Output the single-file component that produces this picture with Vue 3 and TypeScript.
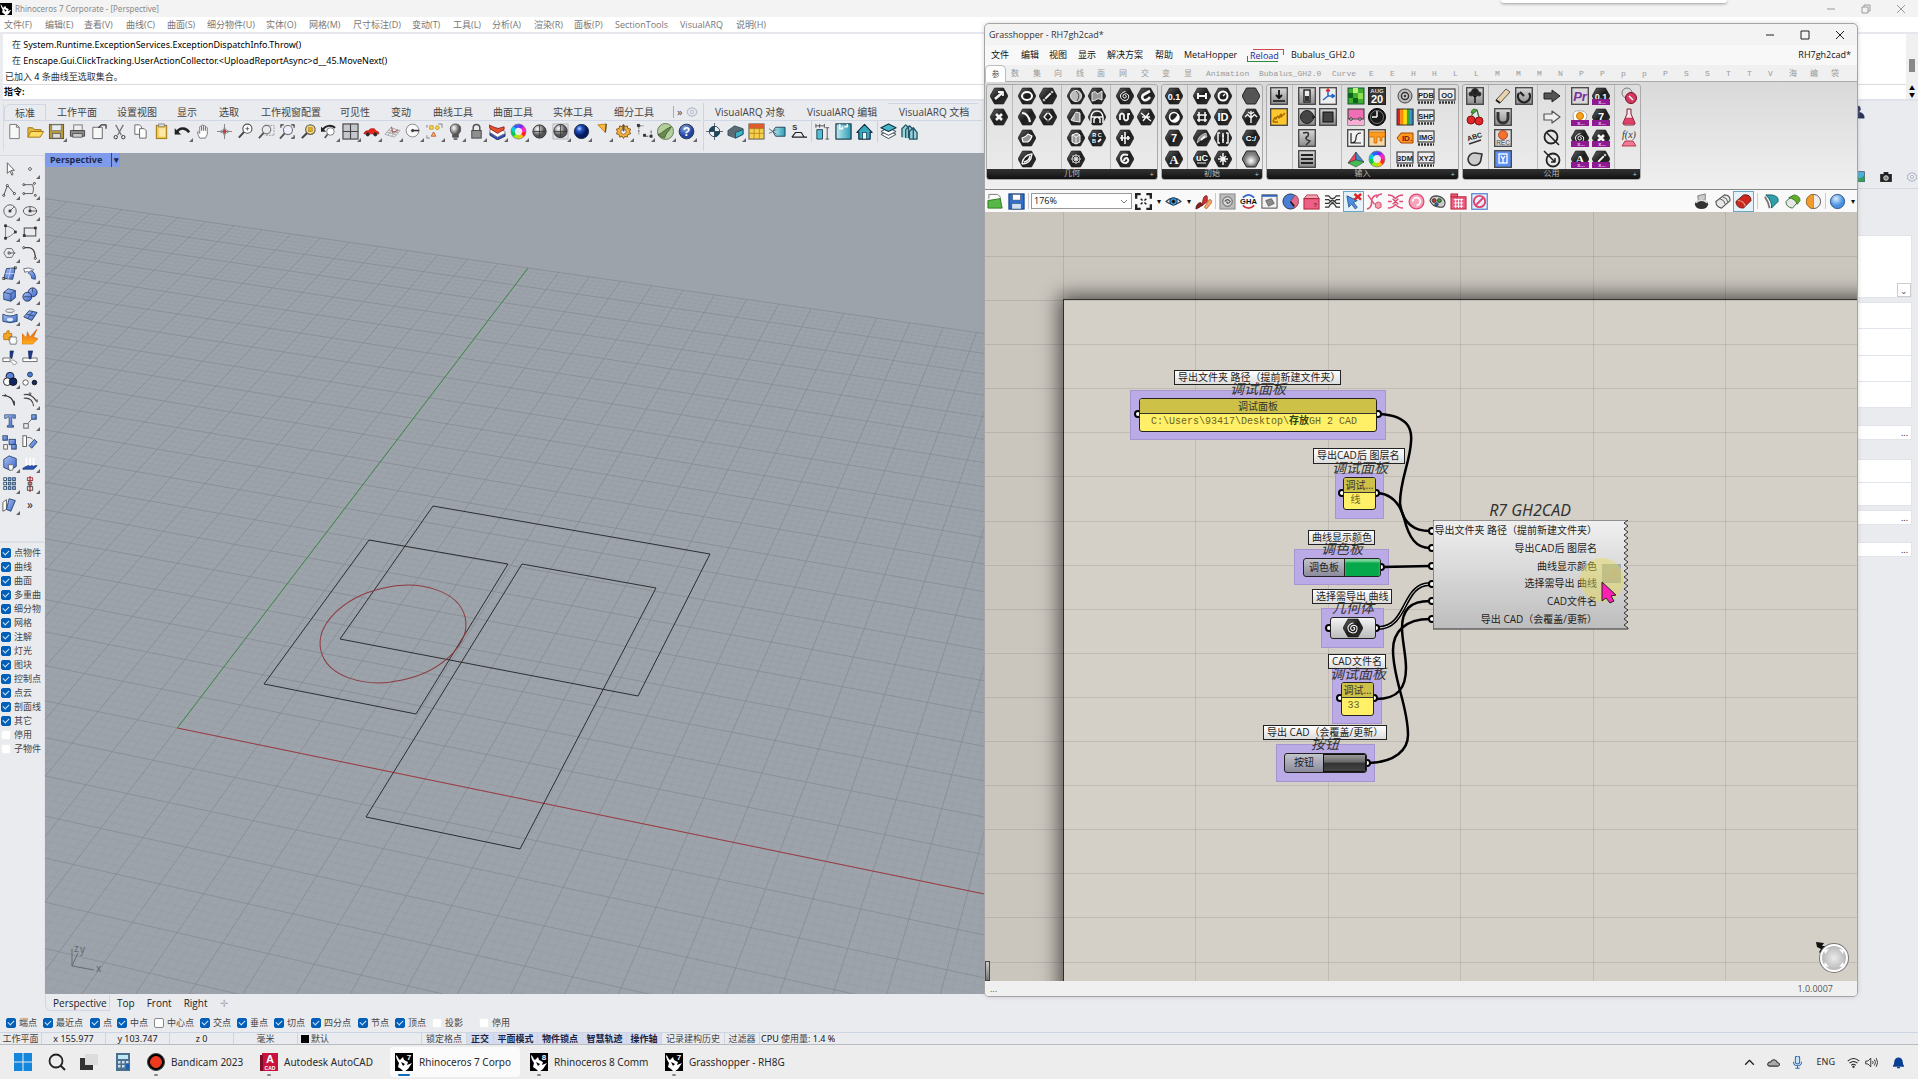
<script setup lang="ts">
import { ref } from 'vue'

interface Item { t: string; w: number }
interface Tool { i: string; more?: boolean; on?: boolean }
interface Box { x: number; y: number; w: number; h: number }

/* ---------- small drawing helpers for the icon set (18 x 18 grid) ---------- */
const p = (d: string, c = '#333', w = 1.2, f = 'none') =>
  `<path d="${d}" fill="${f}" stroke="${c}" stroke-width="${w}" stroke-linejoin="round"/>`
const c = (x: number, y: number, r: number, f = '#fff', st = '#333', w = 1) =>
  `<circle cx="${x}" cy="${y}" r="${r}" fill="${f}" stroke="${st}" stroke-width="${w}"/>`
const r = (x: number, y: number, w: number, h: number, f = '#fff', st = '#333', sw = 1) =>
  `<rect x="${x}" y="${y}" width="${w}" height="${h}" fill="${f}" stroke="${st}" stroke-width="${sw}"/>`
const tx = (t: string, x: number, y: number, size: number, f = '#fff', extra = '') =>
  `<text x="${x}" y="${y}" font-size="${size}" font-family="Liberation Sans, sans-serif" font-weight="bold" text-anchor="middle" fill="${f}" ${extra}>${t}</text>`
const hex = (inner: string) =>
  `<path d="M0 9L4.500 1H13.500L18 9L13.500 17H4.500Z" fill="url(#hexFill)" stroke="#111" stroke-width=".6"/>` + inner
const w = (d: string, sw = 1.8) => p(d, '#f4f4f4', sw)
const tile = (inner: string, f = 'url(#tileFill)') => r(.7, .7, 16.6, 16.6, f, '#444', 1.3) + inner
const chip = (t: string) =>
  r(1, 2, 16, 11, '#eee', '#444', 1.2) + tx(t, 9, 10.5, 7.500, '#222') + p('M1 15.500H17', '#333', 2.500).replace('/>', ' stroke-dasharray="2 1"/>')
const gear = 'M9 1.500l1.500 2.500 2.500-1 .6 2.800 2.900.7-1 2.500 1 2.500-2.900.7-.6 2.800-2.500-1L9 16.500l-1.500-2.500-2.500 1-.6-2.800L1.500 11.500l1-2.500-1-2.500 2.900-.7L5 3l2.500 1z'
const rhino = `<rect width="18" height="18" fill="#000"/><path d="M1 2c2 1 2 4 4 5l3-3 1 3 4 2-1 3 5-2-4 6-4 3-3-3-3-2 1-4C2 7 1 5 1 2z" fill="#fff"/><path d="M6 9l4 2-2 2z" fill="#000"/>`

const icons: Record<string, string> = {
  page: p('M4 1.500H11L14 4.500V16.500H4Z', '#777', 1, '#f7f7f7') + p('M11 1.500V4.500H14', '#777', 1),
  open: p('M1 15V5H6L8 7H15V9', '#a07410', 1, '#e8b843') + p('M1 15L4 9H17.500L14 15Z', '#a07410', 1, '#ffdc62'),
  save: r(1.500, 1.500, 15, 15, '#b59a3c', '#5b553c') + r(4, 2, 10, 6, '#e7edf3', '#777', .8) + r(5, 11, 8, 5, '#ddd', '#555', .8),
  print: r(5, 2, 9, 6, '#eee', '#777') + p('M1.500 8H16.500V14H1.500Z', '#444', 1, '#8b8b8b') + r(4, 11, 10, 4, '#c9c9c9', '#444', .8),
  props: p('M3 4.500H13V16.500H3Z', '#666', 1, '#f8f8f8') + p('M9 5L12 2H17V6', '#333', 1.3),
  cut: p('M5 2L11 13M13 2L7 13', '#777', 1.4) + c(5, 15, 1.800, 'none') + c(13, 15, 1.800, 'none'),
  copy: p('M3 2H8L10 4V12H3Z', '#666', 1, '#fff') + p('M8 6H13L15 8V16H8Z', '#666', 1, '#fff'),
  paste: r(3.500, 2.500, 11, 14, '#f6c544', '#9c7417') + r(6, 1, 6, 3, '#ddd', '#777', .8) + r(6, 5.500, 7, 9, '#fde9a6', 'none', 0),
  undo: p('M3 10C6 4 13 5 16 10', '#222', 2.600) + p('M1 6V12H7Z', '#222', .5, '#222'),
  hand: p('M5 16C3 12 2 10 3 9L5 11V4Q6 3 7 4V8V2.500Q8 2 9 2.500V8V3Q10 2.500 11 3V8V5Q12 4 13 5V12L11 16Z', '#777', 1, '#fff'),
  orbit: p('M1 9H17M9 1V17', '#777', .9) + p('M4 9Q9 5 14 9Q9 13 4 9M9 4Q12 9 9 14Q6 9 9 4', '#888', .9) + c(9, 9, 1.300, '#c33', '#c33'),
  zoom: c(11, 6, 4.800, '#fff', '#555', 1.2) + p('M7.500 9.500L2 15.500', '#444', 2) + p('M9 6H13M11 4V8', '#555', .9),
  zoomw: p('M7 2.500H17V13H7', '#888', .8).replace('/>', ' stroke-dasharray="2 1"/>') + c(9, 7, 4.500, 'none', '#777', 1.2) + p('M6 10.500L1 16', '#555', 2),
  zoome: p('M2 5V2H5M13 2H16V5M16 13V16H13', '#333', 1.2) + c(9.500, 7.500, 4.800, '#eef', '#777', 1.2) + p('M6 11L1 16.500', '#555', 2),
  zooms: c(11, 7, 5, '#fbe25c', '#666', 1.3) + r(9, 5, 4, 4, '#d9b400', '#a67', .6) + p('M7.500 10.500L2 16', '#444', 2.200),
  unview: p('M2 7C5 2 11 2 15 5', '#222', 2) + p('M0 4V9H5Z', '#222', .4, '#222') + c(10, 9, 4, '#fff', '#777') + p('M7 12L4 16', '#555', 1.8),
  views: r(1, 1, 16, 16, '#c4c8cc', '#444', 1.2) + p('M9 1V17M1 9H17', '#444', 1.2),
  car: p('M1 11Q2 8 6 8L8 6H12L14 8.500Q17 9 17 11.500H1Z', '#a00', .6, '#e42618') + c(5, 12, 1.700, '#222') + c(13, 12, 1.700, '#222'),
  cplane: p('M1 12L7 5L17 8L11 15ZM3 9.500L13 12.500M5 7.500L15 10.500M4 13L10 6M8 14L14 7', '#999', .8) + p('M9 10L15 8M9 10L8 4', '#a44', 1),
  cset: c(8, 8, 6.800, '#f8f8f8', '#888') + p('M8 8H15', '#333', 1.6) + c(8, 8, 1.200, '#333'),
  sel: p('M1 5V2M13 1H17V5M1 13V16H4', '#777', .9) + r(4, 3, 3.500, 3.500, '#ffd34a', '#a80', .7) + c(12, 5, 2, '#ffd34a', '#a80', .7) + p('M5.500 14L8 9.500L10.500 14Z', '#b42', .8, '#ffb96a'),
  bulb: p('M6 12Q3 9 3.500 6A5.500 5 0 0 1 14.500 6Q15 9 12 12V15H6Z', '#555', 1, 'url(#greyBall)') + p('M7 17H11', '#444', 1.5),
  lock: p('M5.500 8V5A3.500 3.500 0 0 1 12.500 5V8', '#555', 1.6) + r(4, 8, 10, 8, '#8f8f8f', '#444'),
  layers: p('M1 10L8 7L17 11V14L9 18L1 13Z', '#224', .8, '#2a53c0') + p('M1 7L8 5L17 9V11L9 15L1 10Z', '#766', .8, '#fff') + p('M0 2L9 6L16 4V7L9 11L1 6Z', '#811', .8, '#e6502c'),
  wheel: ['#f22', '#fb0', '#9e0', '#0c5', '#0cd', '#26f', '#82f', '#f2c'].map((k, n) => {
    const a = (n * Math.PI) / 4, b = a + Math.PI / 4 + .05
    return `<path d="M${9 + 6 * Math.cos(a)} ${9 + 6 * Math.sin(a)}A6 6 0 0 1 ${9 + 6 * Math.cos(b)} ${9 + 6 * Math.sin(b)}" stroke="${k}" stroke-width="4" fill="none"/>`
  }).join('') + c(9, 9, 8, 'none', '#777', .7),
  sphere: c(9, 9, 7, 'url(#greyBall)', '#333') + p('M9 2V16M2 9H16', '#333', .8),
  spheres: r(1, 1, 16, 16, '#dcdfe4', '#aaa', .8) + c(9, 8.500, 7, 'url(#greyBall)', '#333') + p('M9 2V15M2 9H16', '#333', .8),
  ball: c(9, 9, 7.500, 'url(#blueBall)', '#124'),
  cone: p('M4 2L13 1L12 10Z', '#a70', .8, '#ffb53a') + p('M12 10L13 1', '#555', 1.4),
  gear: p(gear, '#875a10', 1, '#f2b13c') + c(9, 9, 2.800, '#fff', '#865') + p('M9 2V9', '#555', 2),
  dims: p('M3 3H8M3 3V12M10 14H16M16 8V14', '#555', 1).replace('/>', ' stroke-dasharray="3 1"/>') + r(1.500, 1.500, 2, 2, '#333') + r(8, 12, 2, 2, '#333') + r(15, 13, 2, 2, '#333'),
  ghball: c(9, 9, 8.500, '#b4cf9d', '#667a55') + p('M1 12C5 12 7 7 15 4C13 9 10 9 8 16Q3 15 1 12Z', '#35531f', .800, '#6a8a55'),
  help: c(9, 9, 7.800, 'url(#blueSoft)', '#234') + tx('?', 9, 13.500, 13),
  va1: c(9, 9, 5.500, '#e9f3f6', '#345') + p('M9 9V3.500A5.500 5.500 0 0 0 3.500 9ZM9 9V14.500A5.500 5.500 0 0 0 14.500 9Z', '#135', .5, '#174a5c') + p('M0 9H18M9 0V18', '#345', .8),
  va2: p('M1 8L8 3L17 6V12L9 16L1 13Z', '#345', .8, '#5b6c74') + p('M9 10L17 7V12L9 16Z', '#145', .8, '#3fb3c6'),
  va3: r(1, 1, 16, 16, '#f6d24b', '#555') + r(1, 1, 16, 5, '#e4572b', 'none', 0) + p('M1 6H17M1 11H17M6.500 1V17M12 1V17', '#b07a22', .8),
  va4: p('M4 9L7 4.500H17V14H7Z', '#245', 1, 'url(#teal)') + p('M0 6L8 12M0 11L8 7', '#456', .8),
  va5: tx('S', 5, 7, 8, '#333') + p('M2 15H18M2 15L6 10H12L15 15', '#222', 1.2),
  va6: p('M3 7H9V17H3Z', '#245', 1, '#4fc0d6') + p('M2 3H11M2 1V5M6 1V5M11 1V5M14 5V17M12 5H16M12 17H16', '#444', .9),
  va7: p('M1 1H17V17H1Z', '#245', 1.4, 'url(#teal)') + p('M5 1V6H8V4M13 1V4H10', '#fff', 1.6),
  va8: p('M1 10L9 1.500L17 10H15V17H3V10Z', '#134', 1.3, '#36a8bf') + r(7, 10, 4, 7, '#e9f6f8', '#245', .8),
  va9: p('M1 12L9 8L17 12L9 16.500Z', '#345', 1, '#fff') + p('M1 9L9 5L17 9L9 13Z', '#345', 1, '#fff') + p('M1 5L9 1L17 5L9 9Z', '#134', 1.2, '#47b7ca'),
  va10: p('M1 15V6L5 2L8 5V16M5 16V7L9 3L13 7V17M9 17V9L13 5L17 10V17Z', '#256', 1.4, '#9bd3dc'),
  arrow: p('M6 2V14L9 11L11 16L12.500 15L10.500 10.500H14Z', '#555', 1, '#fff'),
  pt: c(9, 9, 1.600, '#fff', '#555'),
  pline: p('M2 15L6 4L14 13', '#444', 1) + c(2, 15, 1.200) + c(6, 4, 1.200) + c(14, 13, 1.200),
  curve: p('M2 3H12Q14 8 12 13H2', '#555', 1) + c(2, 3, 1.100) + c(14, 1.500, 1.100) + c(2, 13, 1.100) + c(15, 15, 1.100),
  circle: c(9, 9, 7, 'none', '#555') + p('M9 9L14 4', '#444', .9) + r(8, 8, 2, 2, '#333'),
  ellipse: `<ellipse cx="9" cy="9" rx="7.500" ry="5" fill="none" stroke="#555"/>` + p('M9 9H17M9 9V4', '#444', .9) + r(8, 8, 2, 2, '#333'),
  arc: p('M4 2Q13 4 15 9Q10 14 4 16Z', '#666', .9) + r(3, 1, 2, 2, '#333') + r(14, 8, 2, 2, '#333') + r(3, 15, 2, 2, '#333'),
  rect: r(2.500, 4.500, 13, 9, 'none', '#444', 1.1) + r(1.500, 12, 2, 2, '#333') + r(14, 3.500, 2, 2, '#333'),
  poly: p('M5 4H11L14 9L11 14H5L2 9Z', '#666', 1) + c(8, 9, 1.300) + p('M9 9H15', '#444', .9),
  fillet: p('M2 3H8Q15 4 15 15', '#444', 1.5) + c(2, 3, 1.200) + c(15, 15, 1.200),
  srf: p('M5 3L15 2L12 15L2 14Z', '#246', 1, 'url(#blu)') + p('M4 8.500H14M10 2.500L7 14.500', '#dfe8ff', .8) + r(1, 13, 2, 2, '#fff') + r(14, 1, 2, 2, '#fff'),
  srf2: p('M2 3Q8 1 13 4L10 8Q6 5 3 7Z', '#445', .8, '#fff') + p('M10 5Q16 8 15 15L11 14Q11 9 7 8Z', '#246', .9, 'url(#blu)'),
  box: p('M2 6L7 2L15 4V12L10 16L2 14Z', '#246', 1, 'url(#blu)') + p('M2 6L10 8L15 4M10 8V16', '#246', .9),
  balls: c(12, 6, 5, 'url(#blu)', '#235') + c(6, 11, 5, 'url(#blu)', '#235') + p('M12 1V6M2 11H10', '#235', .8),
  pipe: `<ellipse cx="9" cy="3" rx="5" ry="2" fill="none" stroke="#777"/>` + p('M1 7Q9 11 17 7V15Q9 18 1 15Z', '#246', 1, 'url(#blu)') + `<ellipse cx="9" cy="13" rx="3.500" ry="2" fill="#dfe8ff"/>`,
  mesh: p('M2 10L8 3L17 5L11 14Z', '#246', 1, 'url(#blu)') + p('M5 7L14 9M12 4L6 12', '#246', .9),
  puzzle: p('M2 5H5Q5 1 8 2V5H11V9H8V12H2V9Q0 8 2 7Z', '#a60', .8, '#f6a623') + p('M9 9H16V12Q18 13 16 15V17H9V14Q6 13 9 12Z', '#555', .8, '#fff'),
  burst: p('M0 17V5L5 10L6 3L9 9L17 0L13 9L18 11L12 17Z', '#b50', .5, 'url(#fire)'),
  trim: p('M1 9H9V13H1Z', '#555', .9, '#fff') + p('M9 1H13L11 10L9 8Z', '#124', .6, '#1d3a8a') + p('M10 13L14 17L17 14L12 11Z', '#777', .9, '#fff'),
  split: p('M1 9H17V13H1Z', '#555', .9, '#fff') + p('M7 1H12L10 10H8Z', '#124', .6, '#1d3a8a'),
  bool: c(9, 6, 4.500, '#5b83e2', '#111') + c(6, 12, 4.300, '#fff', '#111') + c(12.500, 12, 4.300, '#12265e', '#111'),
  pts: c(9, 4, 2.800, '#4c78d8', '#245') + c(4, 13, 3, '#fff', '#555') + c(14, 13, 2.600, '#142a66', '#111'),
  ccrv: p('M2 4Q12 4 14 15', '#333', 1.4) + p('M0 4H5L3 2M14 15V10', '#333', .9),
  ccrv2: p('M2 7Q12 6 13 16M2 3Q10 1 16 10', '#444', 1.2) + c(9, 2, 1.100) + c(17, 10, 1.100),
  text: p('M3 2H15V6H13L12 4.500H11V14H13V16H6V14H8V4.500H6L5 6H3Z', '#246', .8, 'url(#blu)'),
  move: r(2, 12, 5, 5, '#eee', '#555') + r(11, 2, 5, 5, 'url(#blu)', '#246') + p('M7 11L11 7', '#444', .9),
  grp: r(1, 2, 5, 5, 'url(#blu)', '#246') + r(8, 6, 7, 6, 'url(#blu)', '#246') + r(2, 12, 4, 5, '#fff', '#555') + r(11, 12, 5, 5, 'url(#blu)', '#246'),
  rot: r(1, 2, 4, 12, '#fff', '#555') + p('M8 13L14 6L17 9L11 16Z', '#246', 1, 'url(#blu)') + p('M6 4Q10 3 12 6', '#555', .9),
  solid: p('M2 5L8 1L16 4V13L9 17L2 14Z', '#246', 1, 'url(#blu)') + p('M7 11H13L12 17H8Z', '#555', .8, '#fff'),
  proj: p('M1 15L6 12H17L13 16H1Z', '#136', .8, '#2c52b8') + p('M5 3V12M9 3V12M13 3V12', '#fff', 1.8),
  arr: [0, 1, 2].map(a => [0, 1, 2].map(b => r(2 + a * 5, 2 + b * 5, 3, 3, a ? '#9db8ee' : '#fff', '#246', 1)).join('')).join(''),
  align: p('M9 0V18', '#c33', 1.4) + r(6, 2, 6, 3, 'none', '#933') + r(7, 7, 4, 3, 'none', '#444') + r(6, 12, 6, 4, 'none', '#444'),
  flow: p('M1 6L5 3V14L1 16Z', '#555', 1, '#fff') + p('M8 2L15 4L10 16L5 14Z', '#246', 1, 'url(#blu)'),

  g_open: p('M2 6V1.500H11L14 4V10', '#777', 1, '#fff') + p('M1 8L14 6L16 16H1Z', '#2a7a1a', 1, '#58b847'),
  g_save: r(1, 1, 16, 16, '#2f6fd0', '#153f86', 1.2) + r(5, 1.500, 8, 6, '#fff', '#555', .6) + r(4, 11, 10, 6, '#cfe0f7', '#245', .6),
  focus: p('M1 6V1H6M12 1H17V6M17 12V17H12M6 17H1V12', '#222', 3) + p('M6 6L8 8M12 6L10 8M6 12L8 10M12 12L10 10', '#222', 1.6),
  eye: p('M1 9Q9 2 17 9Q9 15 1 9Z', '#345', 1.300, '#fff') + c(9, 9, 4, '#3d9be0', '#135') + c(9, 9, 1.600, '#000'),
  brush: p('M7 14L9 5Q12 1 13 4L13 9Z', '#711', .8, '#c33') + p('M10 15L15 7Q19 7 17 11L12 17Z', '#a60', .8, '#f6a27a') + p('M1 17Q1 11 6 10Q9 12 5 15Z', '#400', .8, '#822'),
  g1: r(1, 1, 16, 16, '#bbb', '#888') + c(9, 9, 5, '#ddd', '#555') + p('M6 9Q9 5 12 9Q9 13 8 9', '#555', 1.2),
  gha: p('M3 5Q9 -1 15 5', '#2c68c8', 1.800) + p('M15 13Q9 19 3 13', '#c33', 1.800) + tx('GHA', 9, 12, 8, '#111'),
  g3: r(1, 2, 16, 14, '#f2f2f2', '#444') + r(1, 2, 16, 2, '#36b', 'none', 0) + p('M5 8L11 6L14 11L8 14Z', '#555', .8, '#8b8b8b'),
  g4: c(9, 9, 8, '#4a7fd6', '#235') + p('M9 9L14 2A8 8 0 0 1 13 16Z', '#733', .6, '#e36a8a') + p('M9 9L13 14', '#111', 1.4),
  g5: p('M1 6L4 2H15L17 6Z', '#922', .8, '#f3a0b5') + r(1, 6, 16, 11, '#ec5f86', '#a23') + tx('?', 13, 15, 6, '#722'),
  g6: p('M1 3H5Q9 9 13 3H17M1 7H5Q9 13 13 7H17M1 15H5Q9 7 13 15H17M1 11H5Q9 4 13 11H17', '#333', 1.3),
  g7: p('M2 3L13 8L9 10L13 15L11 17L7 12L4 15Z', '#247', .8, '#4f8fe0') + p('M10 1L17 7M17 1L10 7', '#d22', 2.600),
  g8: p('M1 17Q6 16 6 9Q6 3 12 2M2 2L9 12M17 1Q13 1 11 5', '#e0527c', 1.6) + p('M10 11Q13 8 16 11V15Q13 18 10 15Z', '#c34', .8, '#f3a0b5'),
  g9: p('M1 2Q6 2 9 6Q12 2 17 2M1 9H5M13 9H17M6 6Q9 9 12 12M12 6Q9 9 6 12M1 16Q6 16 9 12Q12 16 17 16', '#e04a76', 1.600),
  g10: c(9, 9, 7.800, '#f6a5bb', '#e04a76', 1.4) + p('M5 9A4 4 0 1 1 9 13', '#fff', 1.8),
  g11: p('M1 8Q2 3 8 3Q16 4 17 10Q17 16 11 15Q3 14 1 8Z', '#444', 1.2, '#ccc') + c(5.500, 8, 2, '#d33') + c(11, 8, 2, '#3a3') + c(8, 12, 1.700, '#36c'),
  g12: r(1, 4, 16, 13, '#e85c82', '#b23') + r(1, 1, 7, 3, '#e85c82', '#b23') + p('M4 7H14M4 10.500H14M4 14H14M6 6V16M12 6V16M9 6V16', '#fff', 1),
  g13: r(.8, .8, 16.400, 16.400, '#e4efff', '#4a78c8', 1.200) + c(9, 9, 6, 'none', '#e0446c', 2) + p('M5 13L13 5', '#e0446c', 2),
  d1: p('M5 3L13 1V7L6 10Z', '#666', .8, '#ccc') + `<ellipse cx="9" cy="12" rx="7" ry="5" fill="#333"/>` + p('M3 10Q9 5 15 10', '#ddd', 2),
  d2: p('M2 9L11 2Q17 2 17 8L8 16Q2 15 2 9Z', '#555', 1.2, '#e8e8e8') + p('M6 6Q11 7 12 12M9 4Q14 5 15 10', '#555', 1),
  d3: p('M1 9L9 2Q17 1 17 8L9 16Q1 16 1 9Z', '#611', .9, '#c9281c') + p('M3 8Q9 8 11 14', '#f29a8a', 1.200),
  d4: p('M3 2H9Q17 3 16 9L9 16Q10 9 3 2Z', '#155', .9, '#2ea0ac') + p('M2 4Q6 10 7 16', '#777', 2),
  d5: p('M2 9L9 3L15 9L9 16Q2 15 2 9Z', '#363', .9, '#e6e6e6') + p('M5 5L11 2Q17 3 17 8L14 12Q12 6 5 5Z', '#262', .8, '#5fae25'),
  d6: c(9, 9, 7.500, '#eee', '#555') + p('M9 1.500A7.500 7.500 0 0 0 9 16.500Z', '#a60', .6, '#f49a2a'),
  d7: c(9, 9, 7.500, 'url(#sky)', '#26508a'),

  h1: hex(w('M5 12L12 6', 2.600) + w('M8 5H13V9')), h2: hex(w('M6 6L12 12M12 6L6 12', 2.600)),
  h3: hex(`<ellipse cx="9" cy="9" rx="5" ry="4" fill="none" stroke="#fff" stroke-width="2"/>`), h4: hex(w('M6 12L12 6') + c(5, 13, 1.500, '#fff') + c(13, 5, 1.500, '#fff')),
  h5: hex(w('M4 5Q10 5 12 14', 2.200)), h6: hex(w('M9 4L13 9L9 13L5 9Z', 1.3) + c(9, 4, 1, '#fff') + c(9, 13, 1, '#fff')),
  h7: hex(p('M4 9Q8 8 10 5L14 7Q13 11 10 13L5 13Z', '#fff', 1.200, '#999')), h8: hex(w('M4 14Q13 14 14 4Q5 5 4 14M6 12Q11 11 12 6', 1.4)),
  h9: hex(c(9, 9, 5.500, '#bbb', '#eee') + p('M9 4Q14 8 10 14', '#555', 1)), h10: hex(p('M4 14V6Q8 3 9 7Q11 6 14 4V13Q10 11 9 12Q7 14 4 14Z', '#eee', 1, '#999')),
  h11: hex(p('M4 12L9 4L13 5V14L6 13Z', '#eee', 1, '#bbb') + p('M9 5V13M11 5V13', '#666', .800)), h12: hex(w('M3 15V9Q4 3 9 3Q14 3 15 9V15M3 9H15M6 15V11Q9 7 12 11V15', 1.5)),
  h13: hex(p('M5 6L10 4L13 6V13L9 15L5 13Z', '#fff', 1, '#999') + p('M5 6L9 8L13 6M9 8V15', '#fff', .800)), h14: hex(tx('R C', 9, 8, 5.500) + tx('B', 6, 14, 5.500) + w('M10 13L13 10', 2)),
  h15: hex(w('M9 9Q10.500 8 10.500 9.500Q10 11.500 8 11Q6 9.500 7.500 7.500Q10.500 5.500 12.500 8Q13.500 13 9 13.500Q4 13 4.500 8Q6.500 4.500 9.500 4.500', 1)),
  h16: hex(w('M13 4L6 8Q4 11 7 13Q10 14 13 10', 2.600)),
  h17: hex(w('M4 12V7Q6 4 8 7V11Q10 14 12 11V6H14', 1.8)), h18: hex(w('M4 5L14 13M6 13L12 5M5 9H13', 1.500)),
  h19: hex(w('M4 9H14M9 3V15', 1.600) + w('M6 6V12M12 7V11', 1.800)), h20: hex(w('M12 5Q6 3 5 8Q5 13 10 13Q14 11 11 8Q8 8 8 11', 2)),
  h21: hex(w('M9 4V14M4 9H14M5.500 5.500L12.500 12.500M12.500 5.500L5.500 12.500', .8) + c(9, 9, 4, 'none', '#ddd', .8) + c(9, 9, 1.500, 'none', '#ddd', .8)),
  n1: hex(tx('0.1', 9, 12.500, 9)), n2: hex(c(9, 9, 4.500, 'none', '#fff', 1.500) + p('M13 6A4.500 4.500 0 0 1 6 13Q11 11 13 6Z', '#fff', .5, '#fff')), n3: hex(tx('7', 9, 13, 11)), n4: hex(tx('A', 9, 13.500, 13, '#fff').replace('Liberation Sans', 'Liberation Serif')),
  n5: hex(w('M4 9H14M5 6V12M13 6V12', 2)), n6: hex(c(9, 9, 4.500, 'none', '#fff', 2) + w('M9 9L11 7', 1.200)), n7: hex(w('M6 4V14M12 4V14M4 7H14M4 12H14', 1.6)), n8: hex(tx('ID', 9, 13, 11)),
  n9: hex(p('M4 14Q5 6 13 4L14 8Q8 10 4 14Z', '#eee', .6, '#999') + w('M8 11L12 7')), n10: hex(w('M6 4H4V14H6M12 4H14V14H12M8 7H10M8 11H10M9 4V14', 1.5)),
  n11: hex(tx('uC', 9, 11, 9) + w('M4 13H13', 1.200)), n12: hex(w('M9 3V15M4 9H14M6 6L12 12M12 6L6 12', 1.500)),
  n13: `<path d="M0 9L4.500 1H13.500L18 9L13.500 17H4.500Z" fill="#555" stroke="#222"/>`, n14: hex(w('M9 15V8M9 10L5 6M9 10L13 6M5 7L3 9M13 7L15 9M9 8V3M6 4L9 6L12 4', 1.400)), n15: hex(tx('C:/', 9, 12, 8)), n16: `<path d="M0 9L4.500 1H13.500L18 9L13.500 17H4.500Z" fill="#777" stroke="#222"/>` + c(9, 9.500, 6, 'url(#whiteBall)', '#888', .5),
  i1: tile(p('M9 3V10M6 8L9 11L12 8', '#111', 1.8) + p('M3 14H15', '#111', 1.6)), i2: tile(p('M3 14Q5 7 6 11Q8 6 9 10Q12 3 11 9L15 5M3 14H8', '#a86c00', 1.500), '#ffc62e'),
  i3: tile(r(6, 3, 6, 12, '#eee', '#222', 1.4) + r(7, 9, 4, 5, '#333', 'none', 0)), i4: tile(c(9, 9, 6.500, '#444', '#222') + p('M15 7L17 9L15 11Z', '#222', 1, '#222')), i5: tile(p('M5 4Q12 2 10 7Q5 10 12 12L8 16', '#333', 1.500)), i6: tile(p('M3 5H15M3 9H15M3 13H15', '#222', 2)),
  i7: tile(p('M9 3V9H15M9 9L4 13', '#26c', 1.5) + p('M7 4L9 1.500L11 4Z', '#d22', 1, '#d22') + p('M13 7L16 9L13 11Z', '#26c', 1, '#26c'), '#eee'), i8: tile(r(4, 4, 10, 10, '#444', '#111')),
  i9: r(1, 1, 16, 16, '#3fae2f', '#153') + r(6, 1, 5, 5, '#b9f27c', 'none', 0) + r(1, 6, 5, 5, '#0c641c', 'none', 0) + r(11, 6, 5, 6, '#8be052', 'none', 0) + r(6, 11, 5, 5, '#0c641c', 'none', 0),
  i10: r(1, 1, 16, 16, '#ee6fb3', '#333') + r(1, 11, 16, 6, '#f7aed4', 'none', 0) + p('M1 11H17', '#333', .8) + c(4, 11, 1.300) + c(13, 11, 1.300), i11: tile(p('M4 14Q9 14 9 9T14 4M4 4V14H14', '#222', 1.2), '#f2f2f2'),
  i12: p('M1 13L9 2L9 10Z', '#333', .6, '#e46') + p('M9 2L17 12L9 10Z', '#333', .5, '#48c') + p('M1 13L9 10L17 12L9 17Z', '#333', .5, '#4b5'),
  i13: r(0, 0, 18, 18, '#333', '#111') + tx('AUG', 9, 6, 6, '#ddd') + tx('20', 9, 16, 11), i14: c(9, 9, 8.500, '#1a1a1a', '#000') + p('M9 9V3M9 9H4', '#fff', 1.400) + c(9, 9, 6.500, 'none', '#888', .8),
  i15: tile(p('M1 3H17V8H14V12H12V8H9V14H6V8H1Z', '#a50', .6, '#ff9c1f'), '#f7d7a6'),
  i17: c(9, 9, 7, '#bbb', '#444') + c(9, 9, 3.500, '#ddd', '#333', 1.500) + c(9, 9, 1, '#222'), i18: ['#d22', '#f80', '#fd0', '#3a3', '#28c'].map((k, n) => r(1 + n * 3.300, 1, 3.300, 16, k, 'none', 0)).join('') + r(1, 1, 16, 16, 'none', '#333'),
  i19: p('M1 9L5 4H17V14H5Z', '#a40', 1, '#ff9a1f') + tx('ID.', 11, 12, 8, '#622'), i20: chip('3DM'), i21: chip('PDB'), i22: chip('SHP'), i23: chip('IMG'), i24: chip('XYZ'), i25: chip('OO'),
  u1: tile(p('M9 16V8M9 10L5 7M9 10L13 7M9 8L7 4M9 8L12 4', '#111', 1.5) + c(9, 5, 3.500, '#222') + c(5, 7, 2, '#222') + c(13, 7, 2, '#222')), u2: c(5, 12, 4, '#e0262a', '#811') + c(13, 13, 4, '#e0262a', '#811') + p('M5 9Q7 4 11 2Q12 6 13 9', '#363', 1.2) + p('M11 2Q6 -1 5 5Q9 6 11 2Z', '#252', .6, '#4ca83a'),
  u3: `<g transform="rotate(-18 9 9)">${tx('ABC', 9, 10, 7, '#222')}</g>` + p('M3 15L15 11', '#333', 1.500), u4: p('M2 9A6.500 6.500 0 1 0 15 9L16 4L9 3A6.500 6.500 0 0 0 2 9Z', '#333', 1.6, '#ccc'),
  u5: p('M2 13L12 2L16 5L6 16Z', '#555', 1, '#e9d3ac') + p('M2 13L6 16', '#222', 2), u6: tile(p('M4 4V10A5 5 0 0 0 14 10V4', '#333', 3)), u7: tile(c(9, 6, 4.500, '#f4732a', '#a32', .8) + tx('REC', 9, 16, 6.500, '#777'), '#ddd'), u8: tile(r(5, 4, 8, 9, 'none', '#fff', 1.300) + p('M9 13V9L7 6M9 9L11 6', '#fff', 1.300), '#5d8ff0'),
  u9: tile(p('M4 6A6 6 0 1 0 14 6M9 9L5 5', '#222', 2.200)), u10: p('M1 6H9V3L17 9L9 15V12H1Z', '#222', 1, '#555'), u11: p('M1 6H9V3L17 9L9 15V12H1Z', '#555', 1.200, '#eee'), u12: c(8, 8, 6.500, 'none', '#222', 1.800) + p('M4 4L16 16', '#222', 1.600), u13: c(10, 10, 6.500, 'none', '#222', 1.800) + p('M1 1L12 12M12 8V12H8', '#222', 1.500),
  u14: tile(tx('Pr', 9, 14, 13, '#7a2fa0', 'font-style="italic"'), '#d9d9d9'),
  u15: c(7, 6, 5, '#ddd', '#777') + c(11, 11, 5.500, '#d63a62', '#712') + p('M9 9L13 13', '#fff', 1.500), u16: p('M7 1H11V6L15 15Q15 17 13 17H5Q3 17 3 15L7 6Z', '#723', 1, '#fbe3ea') + p('M5.500 10H12.500L15 16H3Z', '#a23', .5, '#e0416c'), u17: `<text x="9" y="9" font-size="10" font-family="Liberation Serif, serif" font-style="italic" text-anchor="middle" fill="#333">f(x)</text>` + p('M5 12H13L16 17H2Z', '#a23', .8, '#f07a98'),
  winlogo: `<path d="M0 0h8.500v8.500H0zM9.500 0H18v8.500H9.500zM0 9.500h8.500V18H0zM9.500 9.500H18V18H9.500z" fill="#1487dd"/>`,
  search: c(8, 8, 6.500, 'none', '#222', 1.800) + p('M12.500 12.500L17 17', '#222', 2),
  task: r(0, 5, 13, 12, '#333', 'none', 0) + r(5, 1, 13, 11, '#dcdcdc', 'none', 0),
  calc: r(2, 0, 14, 18, '#4b6f8c', 'none', 0) + r(4, 2, 10, 4, '#bfe6f5', 'none', 0) + r(4, 8, 2.500, 2.500, '#cde', 'none', 0) + r(8, 8, 2.500, 2.500, '#cde', 'none', 0) + r(12, 8, 2.500, 2.500, '#cde', 'none', 0) + r(4, 12, 2.500, 2.500, '#cde', 'none', 0) + r(8, 12, 2.500, 2.500, '#cde', 'none', 0) + r(12, 10.500, 3, 6, '#1c5fae', 'none', 0),
  bandi: c(9, 9, 8.500, '#000', '#444') + c(9, 9, 5.500, '#f03a20', '#f03a20'),
  acad: r(2, 0, 16, 18, '#c8143c', 'none', 0) + r(0, 2, 3, 16, '#7d0c24', 'none', 0) + tx('A', 10, 10, 11) + tx('CAD', 10, 16.500, 5),
  rh: rhino, rh7: rhino + tx('7', 14, 7, 8), rh8: rhino + tx('8', 14, 7, 8),
  up: p('M3 12L9 6L15 12', '#222', 1.800), cloud: p('M3 14Q0 13 1.500 10Q3 8 5 8.500Q7 4 11 5.500Q14 6.500 14 9Q18 10 17 12.500Q16 14.500 14 14Z', '#333', 1.500, '#aaa'), mic: `<rect x="6" y="0" width="6" height="11" rx="3" fill="#cfe3f8" stroke="#2b68b5" stroke-width="1.400"/>` + p('M3.500 8V9Q4 13.500 9 13.500T14.500 9V8M9 13.500V17M6 17H12', '#2b68b5', 1.400),
  wifi: p('M1 7Q9 0 17 7M3.500 10Q9 5 14.500 10M6 13Q9 10 12 13', '#222', 1.400) + c(9, 15, 1.200, '#222'), vol: p('M1 7H4L8 3V15L4 11H1Z', '#222', 1.200) + p('M10.500 7Q12 9 10.500 11M13 5Q16 9 13 13M15.500 3Q19.500 9 15.500 15', '#222', 1.200), bell: p('M2 14Q4 12 4 8A5 5 0 0 1 14 8Q14 12 16 14ZM7 16H11', '#0b3f94', 1.600, '#0b3f94'),
  setting: p(gear, '#9aa3b3', 1) + c(9, 9, 2.500, 'none', '#9aa3b3'),
  camera: r(1, 5, 16, 11, '#222', '#111') + r(6, 2, 6, 3, '#222', '#111') + c(9, 10.500, 3.500, '#888', '#fff'),
  pic: r(0, 1, 17, 15, '#4cb0d8', '#345') + p('M0 15L6 8L10 12L17 7V16H0Z', '#285', .5, '#3c9a5a'),
  user: c(8, 5, 4, '#2a3258', '#2a3258') + p('M0 17Q0 9 8 9T17 15V17Z', '#2a3258', .5, '#2a3258')
}
;[['u18', 'n1'], ['u19', 'n3'], ['u20', 'h2'], ['u21', 'h4'], ['u23', 'h15'], ['u24', 'n4']].forEach(([k, b]) => {
  icons[k] = icons[b] + r(0, 12, 18, 6, '#8d1a8f', 'none', 0) + tx('x...', 10, 16.500, 5.500, '#f0c0f0')
})
icons.u22 = p('M2 8Q2 2 8 3Q15 2 16 8L14 13H3Z', '#999', .8, '#fff') + c(9, 8, 3.500, '#f7a11b', '#c70') + r(0, 12, 18, 6, '#8d1a8f', 'none', 0) + tx('x...', 10, 16.500, 5.500, '#f0c0f0')
icons.i16 = icons.wheel

const it = (s: string, ws: number[]): Item[] => s.split('|').map((t, n) => ({ t, w: ws[n] }))
const tools = (s: string): Tool[] => s.split(' ').map(k => ({ i: k.replace(/[+*]/g, ''), more: k.includes('+'), on: k.includes('*') }))

const menus = it('文件(F)|编辑(E)|查看(V)|曲线(C)|曲面(S)|细分物件(U)|实体(O)|网格(M)|尺寸标注(D)|变动(T)|工具(L)|分析(A)|渲染(R)|面板(P)|SectionTools|VisualARQ|说明(H)',
  [41, 39, 42, 41, 40, 59, 43, 44, 59, 41, 39, 42, 40, 41, 65, 56, 40])
const tabs = it('标准|工作平面|设置视图|显示|选取|工作视窗配置|可见性|变动|曲线工具|曲面工具|实体工具|细分工具', [42, 60, 60, 42, 42, 79, 51, 42, 60, 60, 61, 60])
const vaTabs = it('VisualARQ 对象|VisualARQ 编辑|VisualARQ 文档', [92, 92, 90])
const mainTools = tools('page open save+ print props cut copy paste undo+ hand orbit zoom zoomw zoome zooms unview+ views+ car+ cplane+ cset+ sel+ bulb+ lock+ layers+ wheel+ sphere spheres+ ball+ cone+ gear+ dims+ ghball+ help+')
const vaTools = [tools('va1 va2+ va3 va4 va5'), tools('va6 va7 va8'), tools('va9 va10')]
const sideTools = tools('arrow pt+ pline+ curve+ circle+ ellipse+ arc+ rect+ poly+ fillet+ srf+ srf2+ box+ balls+ pipe+ mesh+ puzzle burst trim split bool+ pts ccrv ccrv2+ text move+ grp rot solid+ proj+ arr+ align+ flow+')

const filters = ref('点物件|曲线|曲面|多重曲|细分物|网格|注解|灯光|图块|控制点|点云|剖面线|其它|停用|子物件'.split('|').map((t, n) => ({ t, on: n < 13, soft: n >= 13 })))
const osnaps = ref(it('端点|最近点|点|中点|中心点|交点|垂点|切点|四分点|节点|顶点|投影|停用', [37, 47, 27, 37, 46, 37, 37, 37, 47, 37, 37, 47, 40]).map((o, n) => ({ ...o, on: n < 11 && n !== 4, soft: n > 10 })))
const status = it('工作平面|x 155.977|y 103.747|z 0|毫米', [42, 64, 64, 64, 64])
const modes = it('锁定格点|正交|平面模式|物件锁点|智慧轨迹|操作轴|记录建构历史|过滤器', [45, 27, 44, 45, 44, 35, 63, 35])

const ghMenus = it('文件|编辑|视图|显示|解决方案|帮助|MetaHopper', [30, 28, 29, 29, 48, 29, 63])
const ghTabs = it('数|集|向|线|面|网|交|变|显|Animation|Bubalus_GH2.0|Curve|E|E|H|H|L|L|M|M|M|N|P|P|p|p|P|S|S|T|T|V|海|编|袋',
  [22, 21, 22, 21, 22, 22, 21, 22, 22, 53, 73, 37, ...Array(20).fill(21), 21, 21, 21])
const ribbon = [
  { t: '几何', g: [['h1 h2'], ['h3 h5 h7 h8', 'h4 h6'], ['h9 h11 h13 h21', 'h10 h12 h14'], ['h15 h17 h19 h20', 'h16 h18']] },
  { t: '初始', g: [['n1 n2 n3 n4'], ['n5 n7 n9 n11', 'n6 n8 n10 n12'], ['n13 n14 n15 n16']] },
  { t: '输入', g: [['i1 i2'], ['i3 i4 i5 i6', 'i7 i8'], ['i9 i10 i11 i12', 'i13 i14 i15 i16'], ['i17 i18 i19 i20', 'i21 i22 i23 i24', 'i25']] },
  { t: '公用', g: [['u1 u2 u3 u4'], ['u5 u6 u7 u8', 'u9'], ['u10 u11 u12 u13'], ['u14 u22 u23 u24', 'u18 u19 u20 u21'], ['u15 u16 u17']] }
].map(q => ({ t: q.t, g: q.g.map(cols => cols.map(s => s.split(' '))) }))
const ghTools = tools('g1 gha g3 g4 g5 g6 g7* g8 g9 g10 g11 g12 g13')

/* ---------- perspective construction plane ---------- */
const A = 0.004868, B = 0.01864
const project = (u: number, v: number) => {
  const s = -u * A, t = v * B, q = 1 + s + t
  return `${((132.3 - 8103 * s + 1424 * t) / q).toFixed(1)} ${((575 - 1119 * (s + t)) / q).toFixed(1)}`
}
const gridPath = (major: boolean) => {
  let d = ''
  for (let n = -100; n <= 100; n++) {
    if ((n % 5 === 0) !== major) continue
    d += `M${project(n / 5, -20)}L${project(n / 5, 20)}M${project(-20, n / 5)}L${project(20, n / 5)}`
  }
  return d
}
const minor = gridPath(false), major = gridPath(true)
const axisX = `M${project(0, 0)}L${project(20, 0)}`
const axisY = `M${project(0, 0)}L${project(0, 20)}`

/* ---------- node canvas ---------- */
const vLines = Array.from({ length: 8 }, (_, k) => Math.round(78 + 132.4 * k))
const hLines = Array.from({ length: 18 }, (_, k) => Math.round(88 + 44.1 * (k - 1)))
const OX = 985, OY = 212
const at = (b: Box) => ({ left: b.x - OX + 'px', top: b.y - OY + 'px', width: b.w + 'px', height: b.h + 'px' })
const b = (x: number, y: number, w: number, h: number): Box => ({ x, y, w, h })
const groups = [b(1130, 390, 256, 50), b(1335, 473, 49, 46), b(1294, 549, 95, 36), b(1321, 608, 63, 40), b(1332, 668, 50, 56), b(1276, 744, 99, 38)]
const titles = [['调试面板', 1258, 389], ['调试面板', 1360, 468], ['调色板', 1342, 549], ['几何体', 1353, 608], ['调试面板', 1358, 674], ['按钮', 1325, 744]] as [string, number, number][]
const notes = [
  { t: '导出文件夹 路径（提前新建文件夹）', b: b(1174, 370, 167, 15) }, { t: '导出CAD后 图层名', b: b(1313, 448, 92, 16) }, { t: '曲线显示颜色', b: b(1308, 530, 67, 15) },
  { t: '选择需导出 曲线', b: b(1312, 589, 80, 15) }, { t: 'CAD文件名', b: b(1328, 654, 58, 15) }, { t: '导出 CAD（会覆盖/更新）', b: b(1263, 725, 124, 15) }
]
const panels = [
  { h: '调试面板', a: 'C:\\Users\\93417\\Desktop\\', m: '存放', z: 'GH 2 CAD', b: b(1139, 398, 238, 34) },
  { h: '调试...', a: '', m: '线', z: '', b: b(1343, 477, 33, 33), thin: true }, { h: '调试...', a: '33', m: '', z: '', b: b(1341, 682, 33, 34) }
]
const grips = [[1138, 414], [1378, 414], [1342, 493], [1376, 493], [1381, 567], [1329, 628], [1376, 628], [1340, 698], [1374, 698], [1367, 763], [1432, 531], [1432, 548], [1432, 566], [1432, 584], [1432, 601], [1432, 619]]
const wires = [
  'M1380 414C1411 416 1412 432 1411 442C1410 462 1400 480 1400 503C1402 520 1410 531 1430 531',
  'M1377 493C1392 494 1400 504 1404 518C1409 538 1416 548 1430 548', 'M1383 567L1430 566',
  'M1376 699C1398 699 1406 688 1406 668C1406 655 1402 640 1402 628C1402 610 1410 601 1430 601',
  'M1369 763C1395 762 1408 750 1408 735C1408 705 1393 680 1393 650C1393 632 1405 619 1430 619'
]
const geoWire = 'M1378 628C1408 628 1402 584 1430 584'
const inputs = ['导出文件夹 路径（提前新建文件夹）', '导出CAD后 图层名', '曲线显示颜色', '选择需导出 曲线', 'CAD文件名', '导出 CAD（会覆盖/更新）']
/* component outline: straight on the left, saw-tooth on the right */
let torn = 'M0 0H195'
for (let y = 0; y < 108; y += 6) torn += `L191 ${y + 3}L195 ${y + 6}`
torn += 'V109H0Z'
const zoomLevel = ref('176%')
const command = ref('')
</script>

<template>
  <div class="desk">
    <svg class="defs" width="0" height="0">
      <defs>
        <linearGradient id="hexFill" x2="1" y2="1"><stop offset="0" stop-color="#666" /><stop offset=".5" stop-color="#1c1c1c" /><stop offset="1" stop-color="#333" /></linearGradient>
        <linearGradient id="tileFill" x2="0" y2="1"><stop offset="0" stop-color="#d8d8d8" /><stop offset="1" stop-color="#8c8c8c" /></linearGradient>
        <radialGradient id="greyBall" cx=".35" cy=".3"><stop offset="0" stop-color="#fff" /><stop offset="1" stop-color="#555" /></radialGradient>
        <radialGradient id="whiteBall" cx=".5" cy=".6"><stop offset="0" stop-color="#fff" /><stop offset="1" stop-color="#888" /></radialGradient>
        <radialGradient id="dial"><stop offset="0" stop-color="#ececec" /><stop offset="1" stop-color="#b4b4b4" /></radialGradient>
        <radialGradient id="blueBall" cx=".35" cy=".3"><stop offset="0" stop-color="#bcd6ff" /><stop offset=".4" stop-color="#2255c4" /><stop offset="1" stop-color="#041a5c" /></radialGradient>
        <radialGradient id="blueSoft" cx=".4" cy=".3"><stop offset="0" stop-color="#8fa9e8" /><stop offset="1" stop-color="#2243a0" /></radialGradient>
        <radialGradient id="sky" cx=".4" cy=".3"><stop offset="0" stop-color="#d9ecff" /><stop offset="1" stop-color="#4a90e0" /></radialGradient>
        <linearGradient id="blu" x2="1" y2="1"><stop offset="0" stop-color="#a9c0f5" /><stop offset="1" stop-color="#3c66cc" /></linearGradient>
        <linearGradient id="teal" x2="1" y2="0"><stop offset="0" stop-color="#c2ebf2" /><stop offset="1" stop-color="#2b9db4" /></linearGradient>
        <linearGradient id="fire" x2="0" y2="1"><stop offset="0" stop-color="#e8590c" /><stop offset="1" stop-color="#ffb01f" /></linearGradient>
        <linearGradient id="comp" x2="0" y2="1"><stop offset="0" stop-color="#f0f0f0" /><stop offset="1" stop-color="#bdbdbd" /></linearGradient>
      </defs>
    </svg>

    <header class="title">
      <svg class="logo" viewBox="0 0 18 18" v-html="icons.rh"></svg>
      <span>Rhinoceros 7 Corporate - [Perspective]</span>
      <i class="hint"></i>
      <div class="winctl">
        <button aria-label="Minimize"><svg viewBox="0 0 10 10"><path d="M1 5H9" /></svg></button>
        <button aria-label="Restore"><svg viewBox="0 0 10 10"><path d="M1 3H7V9H1ZM3 3V1H9V7H7" /></svg></button>
        <button aria-label="Close"><svg viewBox="0 0 10 10"><path d="M1 1L9 9M9 1L1 9" /></svg></button>
      </div>
    </header>

    <nav class="menu"><a v-for="m in menus" :key="m.t" href="#" :style="{ width: m.w + 'px' }">{{ m.t }}</a></nav>

    <section class="cmd">
      <div class="cmdmain">
        <div class="history">
          <p class="ind">在 <b>System.Runtime.ExceptionServices.ExceptionDispatchInfo.Throw()</b></p>
          <p class="ind">在 <b>Enscape.Gui.ClickTracking.UserActionCollector.&lt;UploadReportAsync&gt;d__45.MoveNext()</b></p>
          <p>已加入 <b>4</b> 条曲线至选取集合。</p>
        </div>
        <label class="prompt"><strong>指令:</strong><input v-model="command" type="text" /></label>
      </div>
      <div class="cmdbar"><i class="track"><i></i></i><button aria-label="Up">▲</button><button aria-label="Down">▼</button></div>
    </section>

    <section class="bars">
      <div class="bar main">
        <div class="tabs">
          <button v-for="(t, n) in tabs" :key="t.t" :class="{ cur: n === 0 }" :style="{ width: t.w + 'px' }">{{ t.t }}</button>
          <span class="ovf">»</span><svg class="cog" viewBox="0 0 18 18" v-html="icons.setting"></svg>
        </div>
        <div class="icons">
          <button v-for="t in mainTools" :key="t.i" class="cell" :class="{ more: t.more }" :aria-label="t.i"><svg viewBox="0 0 18 18" v-html="icons[t.i]"></svg></button>
        </div>
      </div>
      <div class="bar va">
        <div class="tabs">
          <button v-for="(t, n) in vaTabs" :key="t.t" :class="{ last: n === 2 }" :style="{ width: t.w + 'px' }">{{ t.t }}</button>
        </div>
        <div class="icons">
          <div v-for="(g, n) in vaTools" :key="n" class="cluster">
            <button v-for="t in g" :key="t.i" class="cell" :class="{ more: t.more }" :aria-label="t.i"><svg viewBox="0 0 18 18" v-html="icons[t.i]"></svg></button>
          </div>
        </div>
      </div>
      <svg class="user" viewBox="0 0 18 18" v-html="icons.user"></svg>
    </section>

    <main class="work">
      <aside class="side">
        <div class="palette">
          <button v-for="t in sideTools" :key="t.i" class="cell" :class="{ more: t.more }" :aria-label="t.i"><svg viewBox="0 0 18 18" v-html="icons[t.i]"></svg></button>
          <button class="cell more2">»</button>
        </div>
        <div class="filters">
          <label v-for="f in filters" :key="f.t"><input v-model="f.on" type="checkbox" :class="{ soft: f.soft }" />{{ f.t }}</label>
        </div>
      </aside>
      <div class="view">
        <svg class="scene" width="100%" height="100%">
          <path :d="minor" class="minor" /><path :d="major" class="major" />
          <path :d="axisX" class="ax" /><path :d="axisY" class="ay" />
          <g class="crv">
            <path d="M324 387L463 411L371 561L219 531Z" />
            <path d="M388 353L665 401L593 543L295 486Z" />
            <path d="M477 411L611 435L475 696L321 664Z" />
          </g>
          <ellipse class="sel" cx="348" cy="481" rx="74" ry="47" transform="rotate(-13 348 481)" />
          <g class="gizmo"><path d="M27 796V813L49 817M27 813L33 800" /><text x="29" y="799">z</text><text x="35" y="800">y</text><text x="51" y="819">x</text></g>
        </svg>
        <button class="vlabel"><span>Perspective</span><i>▾</i></button>
      </div>
      <aside class="props">
        <div class="phead"><svg viewBox="0 0 18 18" v-html="icons.pic"></svg><svg viewBox="0 0 18 18" v-html="icons.camera"></svg><svg viewBox="0 0 18 18" v-html="icons.setting"></svg></div>
        <div class="pbody">
          <div class="block a"><select aria-label="value"><option>⌄</option></select></div>
          <div class="block c"><i></i><i></i><i></i></div>
          <div class="block r"><button>...</button></div>
          <div class="block d"><i></i></div>
          <div class="block r near"><button>...</button></div>
          <div class="block r"><button>...</button></div>
        </div>
      </aside>
    </main>

    <nav class="vtabs"><button class="cur">Perspective</button><button>Top</button><button>Front</button><button>Right</button><span>✛</span></nav>

    <section class="osnap">
      <label v-for="o in osnaps" :key="o.t" :style="{ width: o.w + 'px' }"><input v-model="o.on" type="checkbox" :class="{ soft: o.soft }" />{{ o.t }}</label>
    </section>

    <footer class="status">
      <span v-for="(s, n) in status" :key="s.t" :class="{ num: n > 0 && n < 4 }" :style="{ width: s.w + 'px' }">{{ s.t }}</span>
      <span class="layer"><i></i>默认</span>
      <button v-for="(m, n) in modes" :key="m.t" :class="{ on: n > 0 && n < 6 }" :style="{ width: m.w + 'px' }">{{ m.t }}</button>
      <span class="cpu"><b>CPU</b> 使用量: <b>1.4 %</b></span>
    </footer>

    <footer class="taskbar">
      <button class="tb" aria-label="Start"><svg viewBox="0 0 18 18" v-html="icons.winlogo"></svg></button>
      <button class="tb" aria-label="Search"><svg viewBox="0 0 18 18" v-html="icons.search"></svg></button>
      <button class="tb" aria-label="Task view"><svg viewBox="0 0 18 18" v-html="icons.task"></svg></button>
      <button class="tb calc" aria-label="Calculator"><svg viewBox="0 0 18 18" v-html="icons.calc"></svg></button>
      <button class="app a1"><svg viewBox="0 0 18 18" v-html="icons.bandi"></svg><span>Bandicam 2023</span></button>
      <button class="app a2"><svg viewBox="0 0 18 18" v-html="icons.acad"></svg><span>Autodesk AutoCAD</span></button>
      <button class="app a3 cur"><svg viewBox="0 0 18 18" v-html="icons.rh7"></svg><span>Rhinoceros 7 Corpo</span></button>
      <button class="app a4"><svg viewBox="0 0 18 18" v-html="icons.rh8"></svg><span>Rhinoceros 8 Comm</span></button>
      <button class="app a5"><svg viewBox="0 0 18 18" v-html="icons.rh7"></svg><span>Grasshopper - RH8G</span></button>
      <div class="tray">
        <svg viewBox="0 0 18 18" v-html="icons.up"></svg><svg viewBox="0 0 18 18" v-html="icons.cloud"></svg><svg viewBox="0 0 18 18" v-html="icons.mic"></svg>
        <span>ENG</span>
        <svg class="t" viewBox="0 0 18 18" v-html="icons.wifi"></svg><svg class="t" viewBox="0 0 18 18" v-html="icons.vol"></svg><svg viewBox="0 0 18 18" v-html="icons.bell"></svg>
      </div>
    </footer>

    <section class="gh">
      <header class="ghtitle">
        <span>Grasshopper - RH7gh2cad*</span>
        <div class="winctl dark">
          <button aria-label="Minimize"><svg viewBox="0 0 10 10"><path d="M1 5H9" /></svg></button>
          <button aria-label="Maximize"><svg viewBox="0 0 10 10"><path d="M1 1H9V9H1Z" /></svg></button>
          <button aria-label="Close"><svg viewBox="0 0 10 10"><path d="M1 1L9 9M9 1L1 9" /></svg></button>
        </div>
      </header>
      <nav class="ghmenu">
        <a v-for="m in ghMenus" :key="m.t" href="#" :style="{ width: m.w + 'px' }">{{ m.t }}</a>
        <a href="#" class="reload"><i class="rt"></i>Reload<i class="rb"></i></a>
        <a href="#">Bubalus_GH2.0</a>
        <span class="doc">RH7gh2cad*</span>
      </nav>
      <nav class="ghtabs"><button class="cur">参</button><button v-for="(t, n) in ghTabs" :key="n" :style="{ width: t.w + 'px' }">{{ t.t }}</button></nav>
      <div class="ribbon">
        <div v-for="q in ribbon" :key="q.t" class="panel">
          <div class="sets">
            <div v-for="(g, n) in q.g" :key="n" class="set">
              <div v-for="(col, k) in g" :key="k" class="col">
                <button v-for="i in col" :key="i" class="cell big" :aria-label="i"><svg viewBox="0 0 18 18" v-html="icons[i]"></svg></button>
              </div>
            </div>
          </div>
          <div class="cap">{{ q.t }}<i>+</i></div>
        </div>
      </div>
      <div class="ghbar">
        <button class="cell" aria-label="Open"><svg viewBox="0 0 18 18" v-html="icons.g_open"></svg></button>
        <button class="cell" aria-label="Save"><svg viewBox="0 0 18 18" v-html="icons.g_save"></svg></button>
        <i class="sep"></i>
        <span class="combo"><select v-model="zoomLevel" aria-label="Zoom"><option>176%</option><option>100%</option></select><svg viewBox="0 0 8 6"><path d="M1 1L4 4L7 1" /></svg></span>
        <button class="cell"><svg viewBox="0 0 18 18" v-html="icons.focus"></svg></button><i class="dd">▾</i>
        <button class="cell"><svg viewBox="0 0 18 18" v-html="icons.eye"></svg></button><i class="dd">▾</i>
        <button class="cell"><svg viewBox="0 0 18 18" v-html="icons.brush"></svg></button>
        <i class="sep"></i>
        <button v-for="t in ghTools" :key="t.i" class="cell" :class="{ on: t.on }" :aria-label="t.i"><svg viewBox="0 0 18 18" v-html="icons[t.i]"></svg></button>
        <i class="grow"></i>
        <button class="cell"><svg viewBox="0 0 18 18" v-html="icons.d1"></svg></button>
        <button class="cell"><svg viewBox="0 0 18 18" v-html="icons.d2"></svg></button>
        <button class="cell on"><svg viewBox="0 0 18 18" v-html="icons.d3"></svg></button>
        <i class="sep wide"></i>
        <button class="cell"><svg viewBox="0 0 18 18" v-html="icons.d4"></svg></button>
        <button class="cell"><svg viewBox="0 0 18 18" v-html="icons.d5"></svg></button>
        <button class="cell"><svg viewBox="0 0 18 18" v-html="icons.d6"></svg></button>
        <i class="sep"></i>
        <button class="cell"><svg viewBox="0 0 18 18" v-html="icons.d7"></svg></button><i class="dd">▾</i>
      </div>

      <div class="canvas">
        <div class="sheet"></div>
        <svg class="layer0" width="100%" height="100%">
          <path v-for="x in vLines" :key="'v' + x" :d="`M${x}.5 0V1200`" class="gl" />
          <path v-for="y in hLines" :key="'h' + y" :d="`M0 ${y}.5H2400`" class="gl" />
        </svg>
        <div v-for="(g, n) in groups" :key="'g' + n" class="group" :style="at(g)"></div>
        <svg class="layer0" width="100%" height="100%">
          <g :transform="`translate(${-OX} ${-OY})`">
            <path v-for="d in wires" :key="d" :d="d" class="wire" />
            <path :d="geoWire" class="wire wide" /><path :d="geoWire" class="wire core" />
            <circle v-for="(g, n) in grips" :key="n" :cx="g[0]" :cy="g[1]" r="3" class="grip" />
          </g>
        </svg>
        <div v-for="(n, k) in notes" :key="'n' + k" class="note" :style="at(n.b)">{{ n.t }}</div>
        <div v-for="(t, k) in titles" :key="'t' + k" class="ntitle" :style="at(b(t[1] - 50, t[2] - 10, 100, 20))">{{ t[0] }}</div>
        <div v-for="(q, k) in panels" :key="'p' + k" class="pan" :style="at(q.b)">
          <h4>{{ q.h }}</h4><p>{{ q.a }}<b :class="{ thin: q.thin }">{{ q.m }}</b>{{ q.z }}</p>
        </div>
        <div class="pill" :style="at(b(1303, 558, 78, 19))"><span>调色板</span><i class="green"></i></div>
        <div class="pill light" :style="at(b(1330, 617, 46, 22))"><svg viewBox="0 0 18 18" v-html="icons.h15"></svg></div>
        <div class="pill" :style="at(b(1284, 753, 83, 20))"><span>按钮</span><button aria-label="按钮"></button></div>
        <div class="ntitle big" :style="at(b(1470, 500, 120, 22))">R7 GH2CAD</div>
        <div class="comp" :style="at(b(1433, 520, 196, 110))">
          <svg width="196" height="110"><path :d="torn" /></svg>
          <ul><li v-for="i in inputs" :key="i">{{ i }}</li></ul>
        </div>
        <svg class="pointer" :style="at(b(1570, 550, 70, 60))" viewBox="0 0 70 60">
          <rect x="32" y="14" width="19" height="19" fill="#8f98a8" opacity=".7" /><path d="M38 29L46 17M42 29L48 20" stroke="#c98" />
          <circle cx="32" cy="30" r="22" fill="#e6dc46" opacity=".42" />
          <path d="M32 32V51L36 48L40 53L44 51L41 46L46 45Z" fill="#ff1fb4" stroke="#222" stroke-width="1" />
        </svg>
        <i class="nub"></i>
        <svg class="compass" viewBox="0 0 36 34">
          <path d="M1 1L9 2L7 5L11 5L6 13L4 11L6 8L2 6Z" fill="#111" />
          <circle cx="19" cy="17" r="15" fill="#777" /><circle cx="19" cy="17" r="13" fill="url(#dial)" stroke="#fff" stroke-width="2" />
          <path d="M9 9L14 8L10 13ZM29 9L24 8L28 13ZM9 25L14 26L10 21ZM29 25L24 26L28 21Z" fill="#fff" />
        </svg>
      </div>
      <footer class="ghstatus"><span>...</span><span>1.0.0007</span></footer>
    </section>
  </div>
</template>

<style>
body { margin: 0; background: #eaebef; }
</style>

<style scoped>
* { box-sizing: border-box; }
.desk { position: relative; display: flex; flex-direction: column; min-height: 100vh; overflow: hidden; background: #eaebef; color: #444; font: 9px/14px "Open Sans", "Noto Sans CJK SC", sans-serif; white-space: nowrap; }
.defs { position: absolute; }
button, select, input { margin: 0; padding: 0; border: 0; background: none; color: inherit; font: inherit; }
a { color: inherit; text-decoration: none; }
p, h4, ul { margin: 0; padding: 0; }
i { font-style: normal; }
svg { display: block; }

.title { display: flex; align-items: center; height: 17px; background: #f3f3f3; color: #8a8a8a; font: 8px/14px "Noto Sans", sans-serif; }
.logo { width: 12px; height: 12px; margin-right: 3px; }
.hint { width: 226px; height: 3px; margin: 0 0 14px auto; border-radius: 0 0 4px 4px; background: #fff; box-shadow: 0 1px 3px #999; }
.winctl { display: flex; gap: 25px; margin: 0 12px 0 99px; }
.winctl svg { width: 10px; height: 10px; }
.winctl path { fill: none; stroke: #999; }
.winctl.dark { margin: 0 12px 0 auto; }
.winctl.dark path { stroke: #222; }

.menu { display: flex; align-items: center; height: 15px; padding-left: 4px; background: #fff; color: #777; }
.menu a { flex: none; }

.cmd { display: flex; height: 69px; border-top: 2px solid #e6e8ee; border-bottom: 2px solid #dfe2ea; border-left: 3px solid #eaebef; background: #fff; color: #333; }
.cmdmain { flex: 1; }
.cmd b { font: 9px/16px "Noto Sans", sans-serif; color: #000; }
.history { padding: 3px 0 0 2px; line-height: 16px; height: 51px; border-bottom: 1px solid #dcdcdc; }
.history .ind { padding-left: 7px; }
.history p { height: 16px; }
.prompt { display: flex; align-items: center; height: 14px; padding-left: 1px; color: #000; }
.prompt input { flex: 1; height: 12px; outline: none; }
.cmdbar { display: flex; flex-direction: column; width: 12px; background: #f0f0f0; font-size: 6px; line-height: 7px; color: #000; }
.track { height: 51px; padding: 25px 3px 0; }
.track i { display: block; height: 13px; background: #888; }

.bars { display: flex; height: 52px; }
.bar { border-left: 1px solid #d5dae3; margin: 2px 0; }
.bar.main { width: 698px; margin-left: 3px; }
.bar.va { width: 279px; border-left: 1px solid #d0d4dc; margin-left: 2px; }
.tabs { display: flex; align-items: center; height: 18px; border-bottom: 1px solid #cfd6e6; font-size: 10px; color: #444; }
.tabs button { flex: none; text-align: left; padding-left: 11px; height: 18px; }
.tabs button.cur { border: 1px solid #cfd6e6; border-bottom: 1px solid #eaebef; border-radius: 6px 0 0 0; margin-bottom: -2px; padding-left: 10px; }
.tabs .last { border-top: 1px solid #cfd6e6; }
.ovf { margin-left: 10px; padding-left: 3px; border-left: 1px solid #aaa; font-size: 11px; line-height: 12px; }
.cog { width: 12px; height: 12px; margin-left: 4px; }
.user { width: 14px; height: 14px; margin: 4px 53px 0 auto; }
.icons { display: flex; }
.cell { position: relative; display: flex; flex: none; align-items: center; justify-content: center; width: 21px; height: 21px; }
.cell svg { width: 17px; height: 17px; }
.palette .cell svg { width: 16px; height: 16px; }
.cell.big svg { width: 18px; height: 18px; }
.more::after { content: ""; position: absolute; right: 0; bottom: 0; border: 2px solid transparent; border-right-color: #666; border-bottom-color: #666; }
.cluster { display: flex; }
.cluster + .cluster { margin-left: 2px; border-left: 1px solid #cdd0d8; }

.work { display: flex; flex: 1; }
.side { width: 45px; border-right: 1px solid #e2e4ea; overflow: hidden; }
.palette { display: grid; grid-template-columns: 20px 22px; height: 386px; margin-top: 2px; padding-top: 2px; border-top: 1px solid #d6d9e2; align-content: start; }
.palette .cell { width: 20px; }
.more2 { font-size: 12px; color: #222; }
.filters { padding-top: 3px; border-top: 2px solid #dcdfe6; }
.filters label { display: flex; align-items: center; height: 14px; width: 42px; padding-left: 1px; overflow: hidden; }
input[type="checkbox"] { appearance: none; flex: none; width: 10px; height: 10px; margin-right: 3px; border: 1px solid #888; border-radius: 2px; background: #fff; }
input[type="checkbox"].soft { border-color: #eee; }
input[type="checkbox"]:checked { border-color: #005fb8; background: #005fb8; }
input[type="checkbox"]:checked::after { content: ""; display: block; width: 5px; height: 3px; margin: 1px; border: solid #cfe3f8; border-width: 0 0 1px 1px; transform: rotate(-45deg); }

.view { position: relative; flex: 1; background: #9da3ab; overflow: hidden; }
.scene { position: absolute; inset: 0; }
.scene path { fill: none; }
.minor { stroke: #949aa1; stroke-width: .5; }
.major { stroke: #868c93; stroke-width: .8; }
.ax { stroke: #9e3b42; }
.ay { stroke: #3c8a46; }
.crv path { stroke: #2c2e31; stroke-width: 1; }
.sel { fill: none; stroke: #8c3b3f; stroke-width: 1; }
.gizmo path { stroke: #666b71; }
.gizmo text { font: 10px "Open Sans", sans-serif; fill: #60656b; }
.vlabel { position: absolute; left: 0; top: 0; display: flex; width: 75px; height: 14px; background: #7f9bec; color: #1e2a4c; font-weight: 700; line-height: 13px; font-size: 9px; }
.vlabel span { flex: 1; text-align: left; padding-left: 5px; font-family: "Noto Sans", sans-serif; }
.vlabel i { width: 9px; border-left: 1px solid #33447a; font-size: 9px; }
.props { width: 62px; }
.phead { display: flex; justify-content: space-between; padding: 18px 0 5px 0; border-bottom: 1px solid #d4d9e4; }
.phead svg { width: 12px; height: 12px; }
.phead svg:first-child { margin-left: -3px; }
.pbody { display: flex; flex-direction: column; align-items: stretch; padding: 46px 6px 0 0; gap: 4px; }
.block { background: #fff; border: 1px solid #e1e4ea; }
.block.a { display: flex; align-items: flex-end; justify-content: flex-end; height: 63px; }
.block select { appearance: none; width: 14px; height: 14px; border: 1px solid #ccc; text-align: center; color: #555; }
.block.c, .block.d { display: flex; flex-direction: column; justify-content: space-evenly; }
.block.c { height: 106px; }
.block.d { height: 47px; margin-top: 15px; }
.block.c i, .block.d i { height: 1px; background: #e1e4ea; }
.block.r { display: flex; justify-content: flex-end; height: 15px; margin-top: 13px; padding-right: 3px; color: #222; }
.block.r.near { margin-top: 0; }

.vtabs { display: flex; align-items: center; height: 18px; padding-left: 45px; font-size: 10px; color: #222; }
.vtabs button { padding: 0 5px 0 7px; height: 16px; }
.vtabs .cur { width: 65px; border: 1px solid #cfd6e6; border-top: 0; border-radius: 0 0 0 6px; }
.vtabs span { margin-left: 8px; color: #aaa; }

.osnap { display: flex; align-items: center; height: 20px; padding: 2px 0 0 6px; }
.osnap label { display: flex; flex: none; align-items: center; }

.status { display: flex; height: 13px; border-top: 1px solid #cdd5e2; border-bottom: 1px solid #b8bcc2; line-height: 11px; font-family: "Noto Sans", "Noto Sans CJK SC", sans-serif; }
.status > * { flex: none; overflow: hidden; border-right: 1px solid #cdd5e2; text-align: center; }
.status .num { color: #222; }
.status .layer { display: flex; align-items: center; gap: 2px; width: 124px; padding-left: 3px; }
.layer i { width: 8px; height: 8px; background: #000; }
.status .on { background: #d5dcf0; color: #1a2440; font-weight: 700; }
.status .cpu { border: 0; padding-left: 1px; }
.cpu b { font-weight: 400; color: #111; }

.taskbar { display: flex; align-items: center; height: 34px; padding-left: 14px; background: #ededed; color: #2a2a2a; font: 10px/14px "Noto Sans", sans-serif; }
.taskbar svg { width: 18px; height: 18px; }
.tb { margin-right: 16px; }
.tb + .tb { margin-right: 14px; }
.tb.calc { margin: 0 15px 0 2px; }
.app { position: relative; display: flex; align-items: center; gap: 6px; height: 30px; }
.a1 { width: 113px; }
.a2 { width: 130px; }
.a3 { width: 130px; padding-left: 5px; border-radius: 4px; background: #fbfbfb; }
.a4 { width: 135px; padding-left: 10px; }
.a5 { width: 135px; padding-left: 10px; }
.app::after { content: ""; position: absolute; bottom: 1px; left: 7px; width: 4px; height: 2px; border-radius: 1px; background: #888; }
.app.cur::after { left: 8px; width: 12px; background: #0f6cbd; }
.a4::after, .a5::after { left: 17px; }
.tray { display: flex; align-items: center; margin: 0 13px 0 auto; font-size: 9px; }
.tray svg { width: 13px; height: 13px; margin-right: 11px; }
.tray span { margin: 0 12px 0 2px; }
.tray svg.t { margin-right: 5px; }
.tray svg.t + svg.t { margin-right: 14px; }
.tray svg:last-child { margin: 0; }

.gh { position: absolute; left: 984px; right: 60px; top: 23px; bottom: 82px; display: flex; flex-direction: column; overflow: hidden; border: 1px solid #a5a5a5; border-radius: 5px; background: #f3f3f3; box-shadow: 0 0 4px #9996; color: #111; }
.ghtitle { display: flex; align-items: center; height: 21px; padding-left: 4px; color: #333; }
.ghmenu { display: flex; align-items: center; height: 20px; padding-left: 6px; background: #f8f8f8; font-size: 9px; }
.ghmenu a { flex: none; }
.reload { position: relative; width: 37px; height: 13px; margin-right: 7px; padding-left: 3px; color: #1b2a9a; line-height: 13px; }
.rt, .rb { position: absolute; height: 6px; }
.rt { left: 6px; right: 0; top: 0; border: solid #d04848; border-width: 1px 1px 0 0; }
.rb { left: 0; right: 6px; bottom: 0; border: solid #2e8a3a; border-width: 0 0 1px 1px; }
.doc { margin: 0 6px 0 auto; }
.ghtabs { display: flex; height: 17px; background: #f0f0f0; color: #999; font: 8px/15px "Liberation Mono", "Noto Sans CJK SC", monospace; border-bottom: 1px solid #aaa; }
.ghtabs button { flex: none; text-align: left; height: 16px; }
.ghtabs .cur { width: 21px; height: 17px; margin-right: 5px; border: 1px solid #bbb; border-bottom: 0; border-radius: 5px 5px 0 0; background: #fff; color: #555; text-align: center; }
.ribbon { display: flex; gap: 3px; height: 107px; padding: 2px 1px 9px; background: linear-gradient(#d9d9d9, #f0f0f0); }
.panel { display: flex; flex-direction: column; border: 1px solid #aaa; border-radius: 3px; background: linear-gradient(#dedede, #ececec); overflow: hidden; }
.sets { display: flex; height: 85px; padding: 0 1px; }
.set { display: flex; }
.set + .set { margin-left: 3px; padding-left: 3px; border-left: 1px solid #bbb; }
.cap { position: relative; height: 11px; background: linear-gradient(#333, #111); color: #bbb; font-size: 8px; line-height: 8px; text-align: center; }
.cap i { position: absolute; right: 3px; top: 1px; }
.ghbar { display: flex; align-items: center; height: 23px; border-top: 1px solid #888; background: #f9f9f9; }
.combo { position: relative; width: 101px; height: 16px; margin: 0 1px; }
.combo select { appearance: none; width: 100%; height: 16px; padding-left: 2px; border: 1px solid #999; background: #fff; font-size: 9px; line-height: 14px; }
.combo svg { position: absolute; right: 4px; top: 6px; width: 8px; height: 6px; pointer-events: none; }
.combo path { fill: none; stroke: #777; }
.ghbar .on { border: 1px solid #6ba8c8; background: #e4f2fa; }
.sep { width: 1px; height: 16px; margin: 0 1px; background: #ccc; }
.sep.wide { margin: 0 3px; }
.dd { width: 9px; font-size: 8px; text-align: center; }
.grow { flex: 1; }

.canvas { position: relative; flex: 1; overflow: hidden; background: #cac5bd; }
.sheet { position: absolute; left: 78px; top: 87px; right: -40px; bottom: -40px; border: 1px solid #333; background: #d4d0c8; box-shadow: 0 0 18px 4px #0009; }
.layer0 { position: absolute; inset: 0; }
.gl { stroke: #00000018; }
.group { position: absolute; border: 1px solid #a895d0; background: #baaae6; }
.wire { fill: none; stroke: #000; stroke-width: 2.5; }
.wire.wide { stroke-width: 4; }
.wire.core { stroke: #ddd; stroke-width: 1; }
.grip { fill: #fff; stroke: #000; stroke-width: 2; }
.note { position: absolute; padding-left: 3px; border: 1px solid #222; background: linear-gradient(#fff, #ddd); color: #222; font-size: 10px; line-height: 13px; overflow: hidden; }
.ntitle { position: absolute; color: #333; font-size: 14px; line-height: 20px; font-style: italic; text-align: center; }
.ntitle.big { font-family: "Noto Sans", sans-serif; font-size: 16px; }
.pan { position: absolute; border: 1px solid #222; border-radius: 3px; background: #fff068; color: #6b6420; overflow: hidden; }
.pan h4 { height: 15px; border-bottom: 1px solid #333; background: #cdc148; color: #333; font-size: 10px; line-height: 14px; font-weight: 400; text-align: center; }
.pan p { padding: 1px 8px 0 0; text-align: center; font: 10px/14px "Liberation Mono", "Noto Sans CJK SC", monospace; }
.pan b { color: #2d4a10; }
.pan b.thin { font-weight: 400; color: #6b6420; }
.pill { position: absolute; display: flex; border: 1px solid #222; border-radius: 3px; background: linear-gradient(#c4c4cc, #8a8a9c); color: #222; font-size: 10px; line-height: 17px; overflow: hidden; }
.pill span { flex: 1; text-align: center; }
.pill .green { width: 36px; border-left: 1px solid #222; background: #05a84a; box-shadow: inset 0 3px 2px #7fd49c; }
.pill button { width: 43px; border: 1px solid #111; background: linear-gradient(#999 0, #666 45%, #333 50%, #444); }
.pill.light { justify-content: center; align-items: center; background: linear-gradient(#f4f4f4, #bbb); }
.pill svg { width: 20px; height: 20px; }
.comp { position: absolute; }
.comp svg { position: absolute; inset: 0; }
.comp path { fill: url(#comp); stroke: #333; }
.comp ul { position: absolute; left: 0; right: 32px; top: 2px; bottom: 2px; display: flex; flex-direction: column; justify-content: space-between; list-style: none; color: #222; font-size: 10px; line-height: 17px; text-align: right; }
.pointer { position: absolute; }
.nub { position: absolute; left: 0; bottom: 0; width: 5px; height: 20px; border: 1px solid #444; background: linear-gradient(#ccc, #777); }
.compass { position: absolute; right: 6px; bottom: 6px; width: 36px; height: 34px; }
.ghstatus { display: flex; justify-content: space-between; height: 15px; padding: 1px 24px 0 5px; background: #f0f0f0; color: #555; font-size: 9px; }
</style>
